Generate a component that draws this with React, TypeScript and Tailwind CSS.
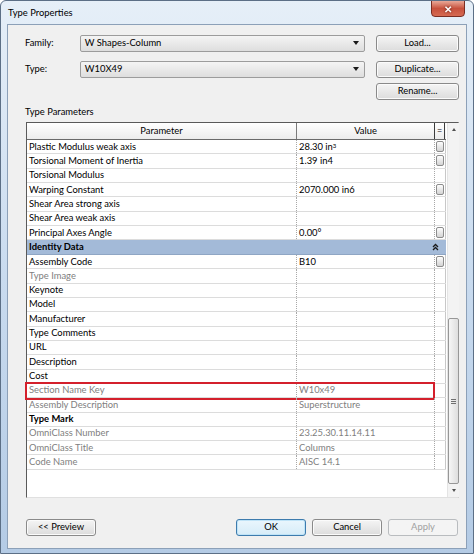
import React from "react";

type Row = {
  name: string;
  value?: React.ReactNode;
  dim?: boolean;
  bold?: boolean;
  btn?: boolean;
  group?: boolean;
  mark?: boolean;
};

const rows: Row[] = [
  { name: "Plastic Modulus weak axis", value: <>28.30 in<sup className="text-[6px] relative -top-[1px]">3</sup></>, btn: true },
  { name: "Torsional Moment of Inertia", value: "1.39 in4", btn: true },
  { name: "Torsional Modulus" },
  { name: "Warping Constant", value: "2070.000 in6", btn: true },
  { name: "Shear Area strong axis" },
  { name: "Shear Area weak axis" },
  { name: "Principal Axes Angle", value: "0.00°", btn: true },
  { name: "Identity Data", group: true },
  { name: "Assembly Code", value: "B10", btn: true },
  { name: "Type Image", dim: true },
  { name: "Keynote" },
  { name: "Model" },
  { name: "Manufacturer" },
  { name: "Type Comments" },
  { name: "URL" },
  { name: "Description" },
  { name: "Cost" },
  { name: "Section Name Key", value: "W10x49", dim: true, mark: true },
  { name: "Assembly Description", value: "Superstructure", dim: true },
  { name: "Type Mark", bold: true },
  { name: "OmniClass Number", value: "23.25.30.11.14.11", dim: true },
  { name: "OmniClass Title", value: "Columns", dim: true },
  { name: "Code Name", value: "AISC 14.1", dim: true },
];

function Combo({ text }: { text: string }) {
  return (
    <div className="w-[286px] h-[17px] flex items-center rounded-[2px] border border-[#9c9c9c] bg-gradient-to-b from-[#f4f4f4] to-[#dedede] pl-[4px] pr-[5px]">
      <span className="flex-1">{text}</span>
      <span className="w-0 h-0 border-l-[3.5px] border-r-[3.5px] border-t-[4px] border-l-transparent border-r-transparent border-t-[#1a1a1a]" />
    </div>
  );
}

function Btn({ text, w = "w-[83px]", kind }: { text: string; w?: string; kind?: "default" | "disabled" }) {
  const look =
    kind === "default"
      ? "border-[#3d7bad] from-[#eaf6fd] to-[#d6ecf8] shadow-[inset_0_0_0_1px_#bfe3f7]"
      : kind === "disabled"
      ? "border-[#b9bcbf] from-[#f4f4f4] to-[#f4f4f4] text-[#a0a0a0]"
      : "border-[#8a8a8a] from-[#f5f5f5] to-[#dcdcdc] shadow-[inset_0_0_0_1px_#fbfbfb]";
  return (
    <div className={`${w} h-[17px] flex items-center justify-center rounded-[3px] border bg-gradient-to-b ${look}`}>
      {text}
    </div>
  );
}

function MiniBtn() {
  return <div className="w-[8px] h-[11px] rounded-[2px] border border-[#8c8c8c] bg-gradient-to-b from-[#fdfdfd] to-[#d4d4d4]" />;
}

export default function App() {
  return (
    <div
      className="relative w-[474px] h-[554px] overflow-hidden rounded-t-[6px] border border-[#5c6f86] bg-gradient-to-b from-[#e6eff8] via-[#c9dbef] to-[#b4cbe5] text-[9.4px] text-black"
      style={{ fontFamily: 'Lato, "Open Sans", sans-serif' }}
    >
      {/* title bar */}
      <div className="h-[23px] pl-[7px] pt-[5px] leading-[14px]">Type Properties</div>
      <div className="absolute right-[8px] -top-[1px] w-[34px] h-[17px] rounded-b-[4px] border border-[#7a2d22] bg-gradient-to-b from-[#e8a898] via-[#c7513d] to-[#d66a52] flex items-center justify-center">
        <span className="text-white font-bold text-[10px] leading-none drop-shadow-[0_0_1px_#5a1a10]">✕</span>
      </div>

      {/* client area */}
      <div className="mx-[6px] h-[525px] border border-[#8ca0b8] bg-[#f0f0f0] pl-[17px] pr-[7px] flex flex-col">
        <div className="mt-[9px] flex items-center h-[18px]">
          <span className="w-[55px]">Family:</span>
          <Combo text="W Shapes-Column" />
          <div className="ml-[11px]"><Btn text="Load..." /></div>
        </div>
        <div className="mt-[8px] flex items-center h-[18px]">
          <span className="w-[55px]">Type:</span>
          <Combo text="W10X49" />
          <div className="ml-[11px]"><Btn text="Duplicate..." /></div>
        </div>
        <div className="mt-[5px] flex justify-end h-[17px]">
          <Btn text="Rename..." />
        </div>
        <div className="mt-[5px] h-[13px] leading-[13px]">Type Parameters</div>

        {/* parameter table */}
        <div className="mt-[4px] ml-[1px] w-[433px] h-[376px] flex border-t border-l border-[#5a5a5a] border-r border-b border-r-[#c8c8c8] border-b-[#e0e0e0] bg-white">
          <div className="w-[419px] flex flex-col">
            <div className="h-[17px] flex border-b border-[#6a6a6a] bg-gradient-to-b from-[#ffffff] to-[#ececec]">
              <div className="w-[270px] flex items-center justify-center border-r border-[#7a7a7a]">Parameter</div>
              <div className="w-[138px] flex items-center justify-center border-r border-[#3c3c3c]">Value</div>
              <div className="w-[10px] flex items-center justify-center border-r border-[#3c3c3c] text-[9px]">=</div>
            </div>
            {rows.map((r) =>
              r.group ? (
                <div key={r.name} className="h-[14.6px] flex items-center bg-[#a3bad8] border-b border-[#8fa6c4] pl-[2px] pr-[7px] font-bold">
                  <span className="flex-1">{r.name}</span>
                  <svg width="7" height="8" viewBox="0 0 7 8">
                    <path d="M1 4 L3.5 1.5 L6 4 M1 7 L3.5 4.5 L6 7" fill="none" stroke="#1a1a1a" strokeWidth="1.3" />
                  </svg>
                </div>
              ) : (
                <div key={r.name} className={`relative h-[14.33px] flex border-b border-[#dcdcdc] ${r.dim ? "text-[#808080]" : ""}`}>
                  <div className={`w-[270px] flex items-center pl-[2px] border-r border-dotted border-[#a8a8a8] ${r.bold ? "font-bold text-black" : ""}`}>{r.name}</div>
                  <div className="w-[138px] flex items-center pl-[2px] border-r border-dotted border-[#a8a8a8] whitespace-nowrap">{r.value}</div>
                  <div className="w-[11px] flex items-center justify-center border-r border-[#c8c8c8]">{r.btn ? <MiniBtn /> : null}</div>
                  {r.mark ? (
                    <div className="absolute -left-[2px] -top-[2px] w-[410px] h-[18px] border-2 border-[#d4202c]" />
                  ) : null}
                </div>
              )
            )}
          </div>

          {/* scrollbar */}
          <div className="ml-[1px] w-[12px] flex flex-col items-center bg-[#f3f3f3] border-l border-[#e4e4e4]">
            <div className="h-[12px] flex items-center justify-center">
              <span className="w-0 h-0 border-l-[2.5px] border-r-[2.5px] border-b-[3px] border-l-transparent border-r-transparent border-b-[#505050]" />
            </div>
            <div className="mt-[183px] w-[11px] h-[166px] rounded-[2px] border border-[#979797] bg-gradient-to-r from-[#f6f6f6] to-[#dedede] flex items-center justify-center">
              <div className="flex flex-col gap-[1px]">
                <div className="w-[5px] h-[1px] bg-[#707070]" />
                <div className="w-[5px] h-[1px] bg-[#707070]" />
                <div className="w-[5px] h-[1px] bg-[#707070]" />
              </div>
            </div>
            <div className="flex-1 flex items-center justify-center">
              <span className="w-0 h-0 border-l-[2.5px] border-r-[2.5px] border-t-[3px] border-l-transparent border-r-transparent border-t-[#505050]" />
            </div>
          </div>
        </div>

        {/* bottom buttons */}
        <div className="mt-[21px] ml-[1px] flex items-center">
          <Btn text="<< Preview" w="w-[70px]" />
          <div className="ml-auto flex gap-[6px] mr-[1px]">
            <Btn text="OK" w="w-[70px]" kind="default" />
            <Btn text="Cancel" w="w-[70px]" />
            <Btn text="Apply" w="w-[70px]" kind="disabled" />
          </div>
        </div>
      </div>
    </div>
  );
}
